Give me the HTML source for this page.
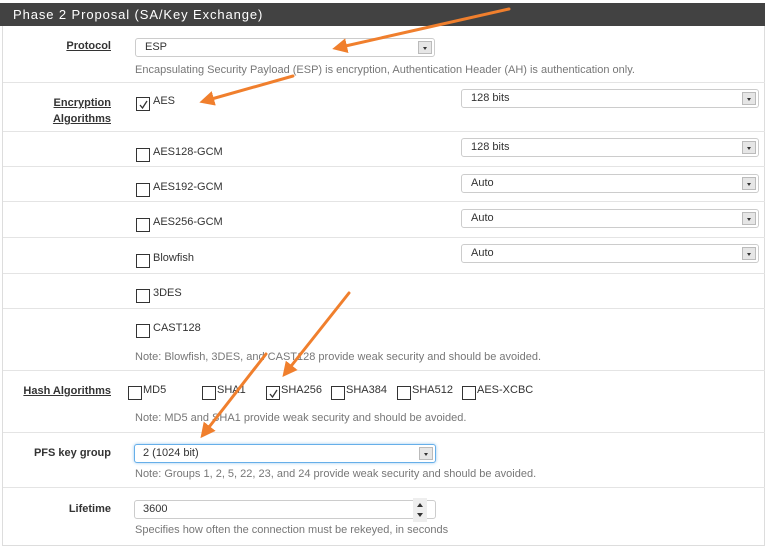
<!DOCTYPE html>
<html><head><meta charset="utf-8"><style>
*{margin:0;padding:0;box-sizing:border-box}
body{width:768px;height:548px;background:#fff;font-family:"Liberation Sans",sans-serif;position:relative;overflow:hidden;color:#333}
.panel{position:absolute;left:2px;top:3px;width:763px;height:543px;border:1px solid #ddd;border-top:none}
.hdr{position:absolute;left:0;top:3px;width:765px;height:23px;background:#424242;color:#fff;font-size:13px;line-height:23px;padding-left:13px;letter-spacing:.9px}
.sep{position:absolute;left:3px;width:762px;height:1px;background:#e4e4e4}
.lbl{position:absolute;right:657px;font-size:11px;font-weight:bold;color:#333;text-align:right;line-height:16px}
.u{text-decoration:underline}
.sel{position:absolute;height:19px;border:1px solid #ccc;border-radius:3px;background:#fff;font-size:11px;line-height:17px;padding-left:9px;color:#333}
.sel .b{position:absolute;right:2px;top:2px;width:14px;height:13px;background:#e6e6e6;border:1px solid #bbb}
.sel .b:after{content:"";position:absolute;left:4px;top:5px;border:2.5px solid transparent;border-top:3px solid #333}
.cb{position:absolute;width:14px;height:14px;border:1.5px solid #333;background:#fff}
.ct{position:absolute;font-size:11px;line-height:14px;color:#333}
.note{position:absolute;left:135px;font-size:11px;color:#777;line-height:12px}
</style></head><body>
<div class="panel"></div>
<div class="hdr">Phase 2 Proposal (SA/Key Exchange)</div>

<div class="sep" style="top:82px"></div>
<div class="sep" style="top:131px"></div>
<div class="sep" style="top:166px"></div>
<div class="sep" style="top:201px"></div>
<div class="sep" style="top:237px"></div>
<div class="sep" style="top:273px"></div>
<div class="sep" style="top:308px"></div>
<div class="sep" style="top:370px"></div>
<div class="sep" style="top:432px"></div>
<div class="sep" style="top:487px"></div>

<div class="lbl u" style="top:38px">Protocol</div>
<div class="sel" style="left:135px;top:38px;width:300px">ESP<div class="b"></div></div>
<div class="note" style="top:64px">Encapsulating Security Payload (ESP) is encryption, Authentication Header (AH) is authentication only.</div>

<div class="lbl u" style="top:95px">Encryption<br>Algorithms</div>
<div class="cb" style="left:136px;top:97px"></div><svg style="position:absolute;left:139px;top:100px" width="9" height="9"><path d="M1 5 L3.5 8 L8 1" fill="none" stroke="#333" stroke-width="1.3"/></svg>
<div class="ct" style="left:153px;top:94px">AES</div>
<div class="sel" style="left:461px;top:89px;width:298px">128 bits<div class="b"></div></div>

<div class="cb" style="left:136px;top:148px"></div><div class="ct" style="left:153px;top:145px">AES128-GCM</div>
<div class="sel" style="left:461px;top:138px;width:298px">128 bits<div class="b"></div></div>
<div class="cb" style="left:136px;top:183px"></div><div class="ct" style="left:153px;top:180px">AES192-GCM</div>
<div class="sel" style="left:461px;top:174px;width:298px">Auto<div class="b"></div></div>
<div class="cb" style="left:136px;top:218px"></div><div class="ct" style="left:153px;top:215px">AES256-GCM</div>
<div class="sel" style="left:461px;top:209px;width:298px">Auto<div class="b"></div></div>
<div class="cb" style="left:136px;top:254px"></div><div class="ct" style="left:153px;top:251px">Blowfish</div>
<div class="sel" style="left:461px;top:244px;width:298px">Auto<div class="b"></div></div>
<div class="cb" style="left:136px;top:289px"></div><div class="ct" style="left:153px;top:286px">3DES</div>
<div class="cb" style="left:136px;top:324px"></div><div class="ct" style="left:153px;top:321px">CAST128</div>
<div class="note" style="top:351px">Note: Blowfish, 3DES, and CAST128 provide weak security and should be avoided.</div>

<div class="lbl u" style="top:383px">Hash Algorithms</div>
<div class="cb" style="left:128px;top:386px"></div><div class="ct" style="left:143px;top:383px">MD5</div>
<div class="cb" style="left:202px;top:386px"></div><div class="ct" style="left:217px;top:383px">SHA1</div>
<div class="cb" style="left:266px;top:386px"></div><svg style="position:absolute;left:269px;top:389px" width="9" height="9"><path d="M1 5 L3.5 8 L8 1" fill="none" stroke="#333" stroke-width="1.3"/></svg><div class="ct" style="left:281px;top:383px">SHA256</div>
<div class="cb" style="left:331px;top:386px"></div><div class="ct" style="left:346px;top:383px">SHA384</div>
<div class="cb" style="left:397px;top:386px"></div><div class="ct" style="left:412px;top:383px">SHA512</div>
<div class="cb" style="left:462px;top:386px"></div><div class="ct" style="left:477px;top:383px">AES-XCBC</div>
<div class="note" style="top:412px">Note: MD5 and SHA1 provide weak security and should be avoided.</div>

<div class="lbl" style="top:445px">PFS key group</div>
<div class="sel" style="left:134px;top:444px;width:302px;border-color:#66afe9;box-shadow:0 0 3px #9cc8ee;padding-left:8px">2 (1024 bit)<div class="b"></div></div>
<div class="note" style="top:468px">Note: Groups 1, 2, 5, 22, 23, and 24 provide weak security and should be avoided.</div>

<div class="lbl" style="top:501px">Lifetime</div>
<div class="sel" style="left:134px;top:500px;width:302px;padding-left:8px">3600</div>
<svg style="position:absolute;left:413px;top:498px" width="14" height="24"><rect x="0" y="0" width="14" height="24" fill="#eee"/><path d="M4 9 L7 5 L10 9Z M4 15 L7 19 L10 15Z" fill="#333"/></svg>
<div class="note" style="top:524px">Specifies how often the connection must be rekeyed, in seconds</div>

<svg style="position:absolute;left:0;top:0" width="768" height="548">
<defs><marker id="a" markerWidth="5" markerHeight="5" refX="2" refY="2.5" orient="auto"><path d="M0 0 L5 2.5 L0 5Z" fill="#f07f2d"/></marker></defs>
<g stroke="#f07f2d" stroke-width="3" stroke-linecap="round" fill="none" marker-end="url(#a)">
<line x1="509" y1="9" x2="341" y2="47"/>
<line x1="293" y1="76" x2="208" y2="100"/>
<line x1="349" y1="293" x2="288" y2="370"/>
<line x1="266" y1="354" x2="206" y2="431"/>
</g></svg>
</body></html>
